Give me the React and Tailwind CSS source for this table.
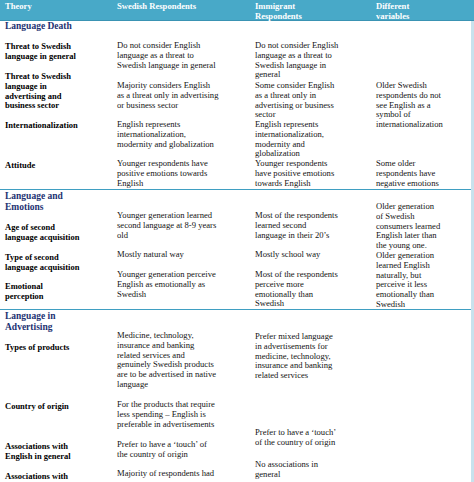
import React from "react";

const Lines = ({ lines, className }) => (
  <div className={className}>
    {lines.map((l, i) => (
      <div key={i} className="whitespace-nowrap">
        {l}
      </div>
    ))}
  </div>
);

const body = "text-[8.6px] leading-[9.8px] text-[#141414]";

// one table row: fixed height, cells may overflow like in the original pdf
function Row({ h, label, sw, im, diff }) {
  const cell = (c) => (c ? <Lines lines={c.lines} className={body} /> : null);
  return (
    <div
      className="grid grid-cols-[117px_138px_121px_1fr] overflow-visible"
      style={{ height: h }}
    >
      <div className="pl-[5px]" style={{ paddingTop: label?.pt || 0 }}>
        {label && (
          <Lines
            lines={label.lines}
            className={
              label.title
                ? "font-bold text-[9.5px] leading-[11px] text-[#1d3272]"
                : "font-bold text-[8.5px] leading-[9.8px] text-black"
            }
          />
        )}
      </div>
      <div style={{ paddingTop: sw?.pt || 0 }}>{cell(sw)}</div>
      <div style={{ paddingTop: im?.pt || 0 }}>{cell(im)}</div>
      <div style={{ paddingTop: diff?.pt || 0 }}>{cell(diff)}</div>
    </div>
  );
}

const Divider = () => <div className="h-px bg-[#3f9fc2]" />;

export default function App() {
  return (
    <div
      className="w-[474px] h-[482px] overflow-hidden bg-white"
      style={{ fontFamily: '"Liberation Serif", "Times New Roman", serif' }}
    >
      {/* header */}
      <div className="grid grid-cols-[117px_138px_121px_1fr] h-[21px] bg-[#48a9c8] border-b border-[#3a93b3] text-white font-bold text-[8.6px] leading-[10px] pt-px">
        <div className="pl-[5px]">Theory</div>
        <div>Swedish Respondents</div>
        <div>
          <div>Immigrant</div>
          <div>Respondents</div>
        </div>
        <div>
          <div>Different</div>
          <div>variables</div>
        </div>
      </div>

      <div className="flex">
        <div className="w-[471px]">
          {/* Language Death */}
          <Row h={19} label={{ title: true, lines: ["Language Death"] }} />
          <Row
            h={32}
            label={{ pt: 2, lines: ["Threat to Swedish", "language in general"] }}
            sw={{
              pt: 1,
              lines: [
                "Do not consider English",
                "language as a threat to",
                "Swedish language in general",
              ],
            }}
            im={{
              pt: 1,
              lines: [
                "Do not consider English",
                "language as a threat to",
                "Swedish language in",
                "general",
              ],
            }}
          />
          <Row
            h={48}
            label={{
              pt: 0,
              lines: [
                "Threat to Swedish",
                "language in",
                "advertising and",
                "business sector",
              ],
            }}
            sw={{
              pt: 9,
              lines: [
                "Majority considers English",
                "as a threat only in advertising",
                "or business sector",
              ],
            }}
            im={{
              pt: 9,
              lines: [
                "Some consider English",
                "as a threat only in",
                "advertising or business",
                "sector",
              ],
            }}
            diff={{
              pt: 9,
              lines: [
                "Older Swedish",
                "respondents do not",
                "see English as a",
                "symbol of",
                "internationalization",
              ],
            }}
          />
          <Row
            h={39}
            label={{ pt: 1, lines: ["Internationalization"] }}
            sw={{
              lines: [
                "English represents",
                "internationalization,",
                "modernity and globalization",
              ],
            }}
            im={{
              lines: [
                "English represents",
                "internationalization,",
                "modernity and",
                "globalization",
              ],
            }}
          />
          <Row
            h={30}
            label={{ pt: 2, lines: ["Attitude"] }}
            sw={{
              lines: [
                "Younger respondents have",
                "positive emotions towards",
                "English",
              ],
            }}
            im={{
              lines: [
                "Younger respondents",
                "have positive emotions",
                "towards English",
              ],
            }}
            diff={{
              lines: ["Some older", "respondents have", "negative emotions"],
            }}
          />
          <Divider />

          {/* Language and Emotions */}
          <Row
            h={21}
            label={{ title: true, pt: 1, lines: ["Language and", "Emotions"] }}
            diff={{
              pt: 12,
              lines: [
                "Older generation",
                "of Swedish",
                "consumers learned",
                "English later than",
                "the young one.",
                "Older generation",
                "learned English",
                "naturally, but",
                "perceive it less",
                "emotionally than",
                "Swedish",
              ],
            }}
          />
          <Row
            h={39}
            label={{ pt: 12, lines: ["Age of second", "language acquisition"] }}
            sw={{
              lines: [
                "Younger generation learned",
                "second language at 8-9 years",
                "old",
              ],
            }}
            im={{
              lines: [
                "Most of the respondents",
                "learned second",
                "language in their 20\u2019s",
              ],
            }}
          />
          <Row
            h={20}
            label={{ pt: 3, lines: ["Type of second", "language acquisition"] }}
            sw={{ lines: ["Mostly natural way"] }}
            im={{ lines: ["Mostly school way"] }}
          />
          <Row
            h={39}
            label={{ pt: 12, lines: ["Emotional", "perception"] }}
            sw={{
              lines: [
                "Younger generation perceive",
                "English as emotionally as",
                "Swedish",
              ],
            }}
            im={{
              lines: [
                "Most of the respondents",
                "perceive more",
                "emotionally than",
                "Swedish",
              ],
            }}
          />
          <Divider />

          {/* Language in Advertising */}
          <Row
            h={21}
            label={{ title: true, pt: 1, lines: ["Language in", "Advertising"] }}
          />
          <Row
            h={69}
            label={{ pt: 12, lines: ["Types of products"] }}
            sw={{
              lines: [
                "Medicine, technology,",
                "insurance and banking",
                "related services and",
                "genuinely Swedish products",
                "are to be advertised in native",
                "language",
              ],
            }}
            im={{
              pt: 1,
              lines: [
                "Prefer mixed language",
                "in advertisements for",
                "medicine, technology,",
                "insurance and banking",
                "related services",
              ],
            }}
          />
          <Row
            h={40}
            label={{ pt: 2, lines: ["Country of origin"] }}
            sw={{
              lines: [
                "For the products that require",
                "less spending \u2013 English is",
                "preferable in advertisements",
              ],
            }}
            im={{
              pt: 28,
              lines: ["Prefer to have a \u2018touch\u2019", "of the country of origin"],
            }}
          />
          <Row
            h={29}
            label={{ pt: 2, lines: ["Associations with", "English in general"] }}
            sw={{
              lines: ["Prefer to have a \u2018touch\u2019 of", "the country of origin"],
            }}
            im={{ pt: 20, lines: ["No associations in", "general"] }}
          />
          <Row
            h={20}
            label={{ pt: 3, lines: ["Associations with"] }}
            sw={{ lines: ["Majority of respondents had"] }}
          />
        </div>
        <div className="w-[3px] h-[461px] bg-[#c8e2ed]" />
      </div>
    </div>
  );
}
